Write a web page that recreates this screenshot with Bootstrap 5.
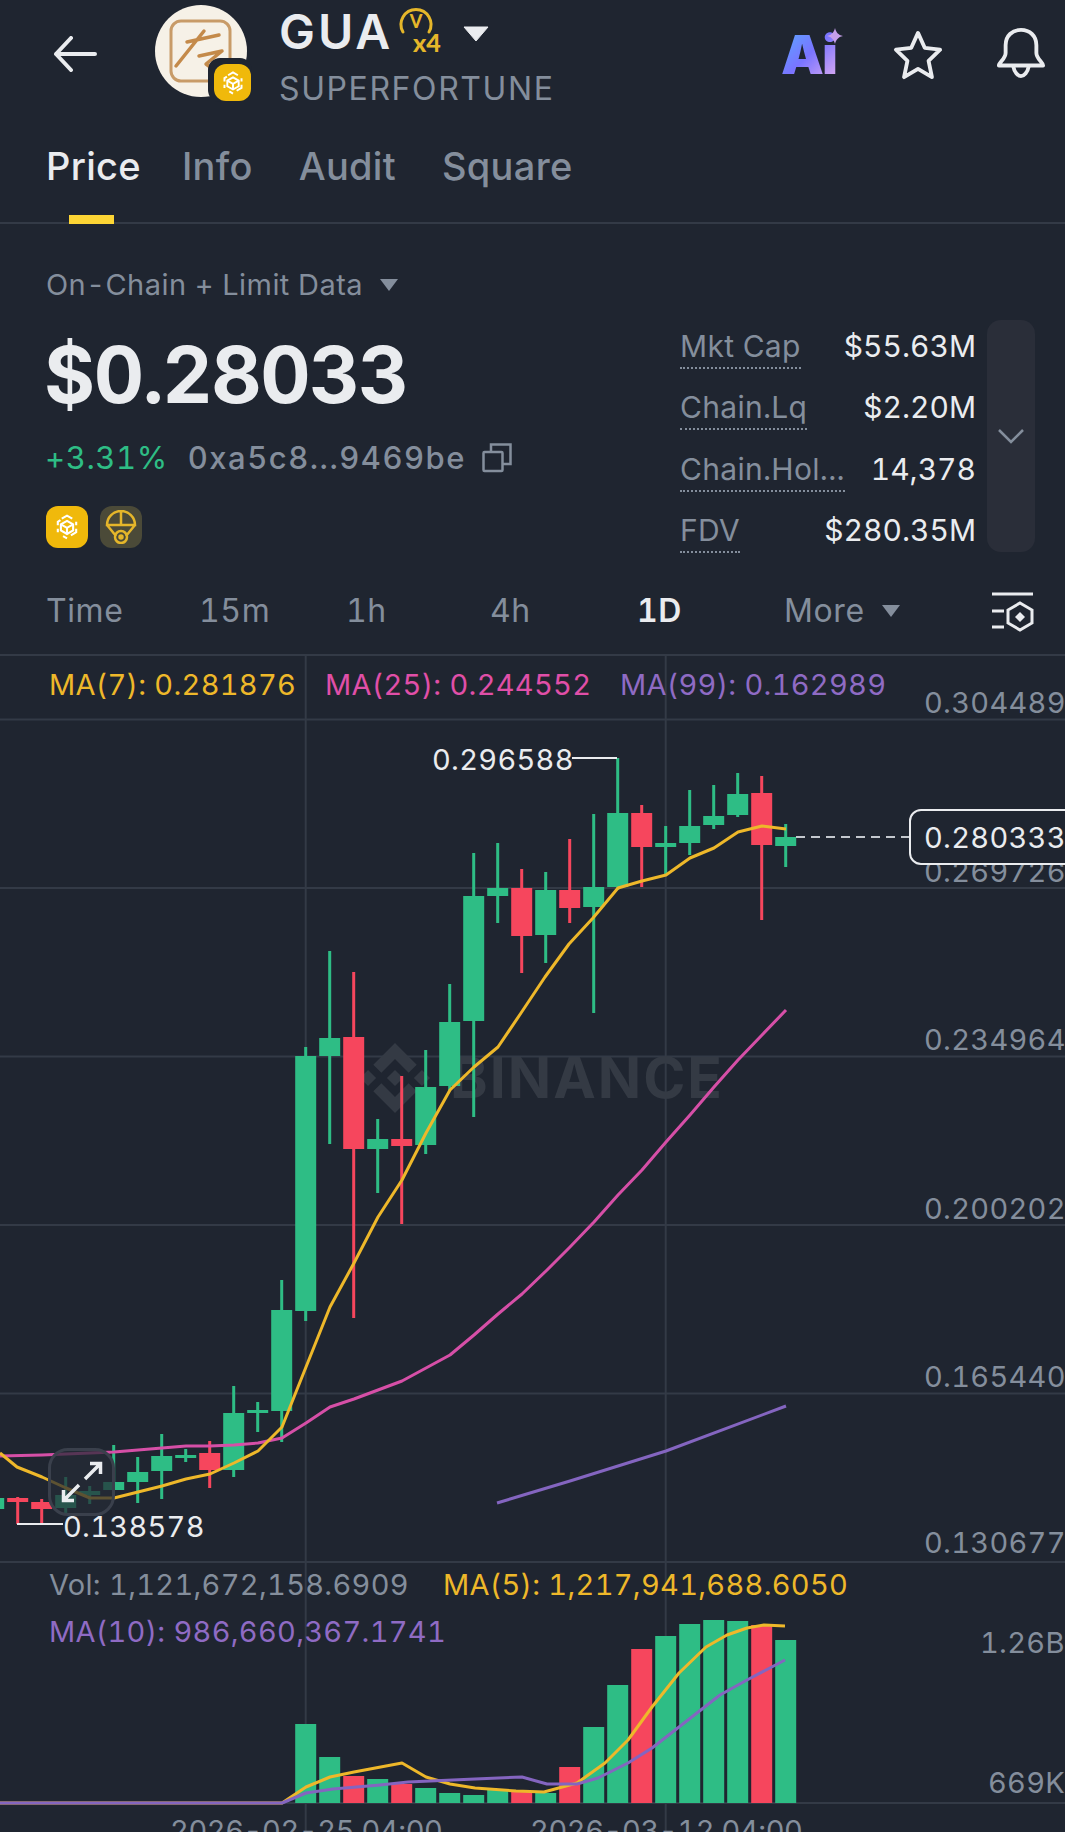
<!DOCTYPE html>
<html lang="en">
<head>
  <meta charset="UTF-8" />
  <title>GUA Price</title>
  <link href="https://cdn.jsdelivr.net/npm/bootstrap@5.3.0/dist/css/bootstrap.min.css" rel="stylesheet" />
  <style>
    html, body { margin: 0; background: #1f2530; }
    body { width: 1065px; height: 1832px; overflow: hidden; font-family: Inter, "Liberation Sans", sans-serif; font-variant-numeric: tabular-nums; color: #eaecef; }

    .top-bar { height: 108px; padding-left: 53px; }
    .back-icon { margin-top: 36px; }
    .avatar-box { width: 94px; height: 94px; margin: 4px 0 0 57px; }
    .chain-chip { right: -4px; bottom: -4px; width: 44px; height: 44px; background: #1f2530; border-radius: 12px; padding: 6px 1px 1px 6px; }
    .title-box { margin-left: 31px; }
    .coin-name { font-size: 48px; font-weight: 600; line-height: 1; margin-top: 8px; letter-spacing: 3px; }
    .coin-full { font-size: 32px; line-height: 1; margin-top: 17px; color: #848e9c; letter-spacing: 1.6px; }
    .vip-icon { margin: 0 0 -4px 3px; }
    .name-caret { margin: 0 0 14px 17px; }
    .ai-box { width: 62px; height: 60px; margin: 24px 0 0 0; }
    .ai-text { font-weight: 900; font-size: 54px; line-height: 1; letter-spacing: -2px; background: linear-gradient(135deg, #5aa7ff 5%, #7a74ff 50%, #d6a8f2 95%); -webkit-background-clip: text; background-clip: text; color: transparent; bottom: 2px; left: 0; }
    .ai-spark { right: 0; top: 4px; }
    .star-icon { margin: 30px 0 0 50px; }
    .bell-icon { margin: 26px 19px 0 53px; }

    .tab-row { height: 116px; padding-left: 46px; gap: 46px; border-bottom: 2px solid #333a46; }
    .tab-item { font-size: 38px; font-weight: 500; color: #848e9c; margin-top: 38px; line-height: 1.1; letter-spacing: .3px; }
    .tab-item.is-on { color: #eaecef; }
    .tab-item.is-on::after { content: ""; position: absolute; left: 23px; bottom: -2px; width: 45px; height: 9px; background: #fcd535; }
    .tab-cell { height: 114px; }
    .tab-first { margin-right: -5px; }

    .summary-box { height: 350px; padding-left: 46px; }
    .source-line { font-size: 29px; line-height: 1; margin-top: 46px; color: #848e9c; letter-spacing: .45px; }
    .price-big { font-size: 78px; font-weight: 700; line-height: 1; margin: 37px 0 0 -2px; letter-spacing: -1.4px; }
    .change-line { font-size: 31px; line-height: 1; margin: 28px 0 0 -1px; }
    .change-up { color: #2ebd85; letter-spacing: .6px; }
    .addr-text { color: #848e9c; font-weight: 500; margin-left: 20px; letter-spacing: 1.5px; }
    .copy-icon { margin-left: 16px; }
    .flag-row { margin-top: 33px; gap: 12px; }
    .flag-chip { width: 42px; height: 42px; border-radius: 12px; background: #f0b90b; }
    .flag-chip.is-dim { background: #4b4a38; }

    .stat-col { margin: 96px 0 0 auto; width: 293px; }
    .stat-line { height: 61.3px; font-size: 30px; line-height: 1; padding-top: 11px; }
    .stat-line > span:last-child { margin-right: -3px; }
    .stat-name { color: #848e9c; height: 38px; border-bottom: 2px dotted #848e9c; letter-spacing: .3px; }
    .expand-col { width: 48px; height: 232px; margin: 96px 30px 0 14px; background: #2a2e39; border-radius: 14px; }

    .range-row { height: 82px; padding-left: 46px; border-bottom: 2px solid #333a46; position: relative; }
    .range-item { font-size: 32px; color: #848e9c; width: 147px; margin-bottom: 6px; letter-spacing: .6px; }
    .range-item:nth-child(1) { width: 153px; }
    .range-item:nth-child(3) { width: 144px; }
    .range-item.is-on { color: #eaecef; font-weight: 600; }
    .range-tool { margin-left: 59px; margin-bottom: 4px; }

    .chart-box { width: 1065px; height: 1176px; }
    .chart-box text { font-family: Inter, "Liberation Sans", sans-serif; font-size: 29px; letter-spacing: .3px; }
    .chart-box text.date-tick { letter-spacing: -.4px; }
    .expand-btn { left: 48px; top: 792px; width: 67px; height: 68px; padding: 0; border: 3px solid #3a404c; border-radius: 20px; background: rgba(38,43,54,.72); }
  </style>
</head>
<body>
  <svg width="0" height="0" class="d-block">
    <symbol id="cube" viewBox="0 0 32 32">
      <g fill="none" stroke="#fff" stroke-width="2.4">
        <path d="M10 6.5 16 3l6 3.5M26.5 10v4M26.5 18v4l-6 3.5M16 29l-4.5-2.6M5.5 22v-4M5.5 14v-4l3-1.8"/>
        <path d="M16 9l7 4v7l-7 4-7-4v-7z"/>
        <path d="M9 13l7 4 7-4M16 17v7"/>
      </g>
    </symbol>
  </svg>

  <div class="top-bar d-flex align-items-start">
    <svg class="back-icon" width="44" height="36" viewBox="0 0 44 36" fill="none" stroke="#eaecef" stroke-width="4" stroke-linecap="round" stroke-linejoin="round"><path d="M42 18H3M18 2 3 18l15 16"/></svg>
    <div class="avatar-box position-relative">
      <svg width="94" height="94" viewBox="0 0 94 94">
        <circle cx="47" cy="47" r="46" fill="#f6f1e7"/>
        <rect x="17" y="17" width="59" height="60" rx="10" fill="none" stroke="#c89b68" stroke-width="3"/>
        <g fill="none" stroke="#c48a4a" stroke-width="3.5" stroke-linecap="round" stroke-linejoin="round">
          <path d="M33 38 65 31M50 27 22 62"/>
          <path d="M45 52 68 47 52 60 63 68"/>
        </g>
      </svg>
      <div class="chain-chip position-absolute">
        <div class="flag-chip d-flex align-items-center justify-content-center w-100 h-100">
          <svg width="26" height="26"><use href="#cube"/></svg>
        </div>
      </div>
    </div>
    <div class="title-box">
      <div class="d-flex align-items-end">
        <div class="coin-name">GUA</div>
        <svg class="vip-icon" width="50" height="54" viewBox="0 0 50 54">
          <path d="M7 26a15 15 0 1 1 26 0" fill="none" stroke="#e5b62a" stroke-width="3" stroke-linecap="round"/>
          <text x="20" y="22" text-anchor="middle" font-family="Lato" font-weight="900" font-size="18" fill="#e5b62a">V</text>
          <text x="17" y="46" font-family="Lato" font-weight="900" font-size="25" fill="#e5b62a">x4</text>
        </svg>
        <svg class="name-caret" width="26" height="16" viewBox="0 0 26 16"><path d="M1 1h24L13 15z" fill="#eaecef" stroke="#eaecef" stroke-linejoin="round"/></svg>
      </div>
      <div class="coin-full">SUPERFORTUNE</div>
    </div>
    <div class="ms-auto d-flex align-items-start">
      <div class="ai-box position-relative">
        <span class="ai-text position-absolute">Ai</span>
        <svg class="ai-spark position-absolute" width="16" height="16" viewBox="0 0 16 16"><path d="M8 0c1 4 3 7 8 8-5 1-7 4-8 8-1-4-3-7-8-8 5-1 7-4 8-8z" fill="#c7a0ea"/></svg>
      </div>
      <svg class="star-icon" width="50" height="50" viewBox="0 0 52 52" fill="none" stroke="#eaecef" stroke-width="4" stroke-linejoin="round"><path d="M26 3l7 15.500 16 2-12 11.500 3.500 17L26 40.500 11.500 49 15 32 3 20.500l16-2z"/></svg>
      <svg class="bell-icon" width="50" height="54" viewBox="0 0 52 54" fill="none" stroke="#eaecef" stroke-width="4" stroke-linejoin="round" stroke-linecap="round"><path d="M3 40c0-3 7-7 7-13V19C10 9 17 3 26 3s16 6 16 16v8c0 6 7 10 7 13z"/><path d="M18 41c1 6 5 10 8 10s7-4 8-10"/></svg>
    </div>
  </div>

  <div class="tab-row d-flex">
    <div class="tab-cell tab-first position-relative"><div class="tab-item is-on">Price</div></div>
    <div class="tab-cell"><div class="tab-item">Info</div></div>
    <div class="tab-cell"><div class="tab-item">Audit</div></div>
    <div class="tab-cell"><div class="tab-item">Square</div></div>
  </div>

  <div class="summary-box d-flex">
    <div>
      <div class="source-line d-flex align-items-center">On-Chain + Limit Data
        <svg class="ms-3" width="20" height="14" viewBox="0 0 20 14"><path d="M1 1h18l-9 12z" fill="#848e9c"/></svg>
      </div>
      <div class="price-big">$0.28033</div>
      <div class="change-line d-flex align-items-center">
        <span class="change-up">+3.31%</span>
        <span class="addr-text">0xa5c8...9469be</span>
        <svg class="copy-icon" width="30" height="30" viewBox="0 0 30 30" fill="none" stroke="#848e9c" stroke-width="2.500"><rect x="1.500" y="9" width="19" height="19" rx="1"/><path d="M9 9V1.500h19.500V21H21"/></svg>
      </div>
      <div class="flag-row d-flex">
        <div class="flag-chip d-flex align-items-center justify-content-center">
          <svg width="28" height="28"><use href="#cube"/></svg>
        </div>
        <div class="flag-chip is-dim d-flex align-items-center justify-content-center">
          <svg width="32" height="34" viewBox="0 0 32 34" fill="none" stroke="#e5b62a" stroke-width="2.500"><path d="M2 15a14 14 0 0 1 28 0zM16 1v14M2 15l9 11M30 15l-9 11"/><circle cx="16" cy="27" r="6"/><circle cx="16" cy="27" r="1.500" fill="#e5b62a"/></svg>
        </div>
      </div>
    </div>
    <div class="stat-col">
      <div class="stat-line d-flex justify-content-between"><span class="stat-name">Mkt Cap</span><span>$55.63M</span></div>
      <div class="stat-line d-flex justify-content-between"><span class="stat-name">Chain.Lq</span><span>$2.20M</span></div>
      <div class="stat-line d-flex justify-content-between"><span class="stat-name">Chain.Hol...</span><span>14,378</span></div>
      <div class="stat-line d-flex justify-content-between"><span class="stat-name">FDV</span><span>$280.35M</span></div>
    </div>
    <div class="expand-col d-flex align-items-center justify-content-center">
      <svg width="28" height="18" viewBox="0 0 28 18" fill="none" stroke="#848e9c" stroke-width="2.500"><path d="M2 3l12 12L26 3"/></svg>
    </div>
  </div>

  <div class="range-row d-flex align-items-center">
    <div class="range-item">Time</div>
    <div class="range-item">15m</div>
    <div class="range-item">1h</div>
    <div class="range-item">4h</div>
    <div class="range-item is-on">1D</div>
    <div class="range-item d-flex align-items-center">More
      <svg class="ms-3" width="20" height="14" viewBox="0 0 20 14"><path d="M1 1h18l-9 12z" fill="#848e9c"/></svg>
    </div>
    <svg class="range-tool" width="44" height="40" viewBox="0 0 44 40" fill="none" stroke="#eaecef" stroke-width="3"><path d="M2 2h41M2 19h12M2 35h12"/><path d="M30 11l12 7v13l-12 7-12-7V18z"/><path d="M30 20l5 5-5 5-5-5z" fill="#eaecef" stroke="none"/></svg>
  </div>

  <div class="chart-box position-relative">
    <svg id="chart" width="1065" height="1176" viewBox="0 656 1065 1176"></svg>
    <button class="btn expand-btn position-absolute" aria-label="Expand">
      <svg width="44" height="44" viewBox="0 0 44 44" fill="none" stroke="#eaecef" stroke-width="3.500"><path d="M25 19 40 4M30 3.500h10.500V14M19 25 4 40M14 40.500H3.500V30"/></svg>
    </button>
  </div>

  <script>
    const GREEN = "#2ebd85", RED = "#f6465d", YELLOW = "#eeb82a", PINK = "#d64fa7", PURPLE = "#8465c0";
    const GRID = "#333a46", GREY = "#848e9c", WHITE = "#eaecef";

    // top, bottom, wick top, wick bottom, colour
    const candles = [
      [1498,1509,1498,1509,"g"],[1498,1502,1497,1524,"r"],[1502,1509,1499,1523,"r"],[1495,1508,1477,1515,"g"],
      [1491,1495,1486,1504,"g"],[1482,1490,1445,1490,"g"],[1472,1482,1457,1503,"g"],[1456,1471,1434,1499,"g"],
      [1455,1458,1449,1462,"g"],[1453,1470,1441,1488,"r"],[1413,1470,1386,1477,"g"],[1410,1413,1402,1432,"g"],
      [1310,1411,1280,1442,"g"],[1056,1311,1047,1321,"g"],[1038,1056,951,1144,"g"],[1037,1149,972,1318,"r"],
      [1139,1149,1119,1193,"g"],[1139,1146,1076,1224,"r"],[1087,1145,1050,1154,"g"],[1022,1086,984,1090,"g"],
      [896,1021,853,1117,"g"],[888,896,843,923,"g"],[888,936,869,973,"r"],[890,935,872,963,"g"],
      [890,908,839,923,"r"],[887,907,814,1013,"g"],[813,887,758,890,"g"],[813,847,805,887,"r"],
      [843,847,826,875,"g"],[826,843,790,855,"g"],[816,825,785,829,"g"],[794,815,773,817,"g"],
      [793,845,776,920,"r"],[837,846,824,867,"g"]
    ];
    const ma7 = "0,1453 17,1467 42,1477 66,1488 90,1498 114,1498 138,1492 162,1486 186,1479 210,1474 234,1463 258,1451 282,1427 306,1367 330,1307 354,1263 378,1217 402,1180 426,1133 450,1090 474,1067 498,1047 521,1013 545,977 569,944 593,918 618,888 642,881 666,875 690,858 714,848 738,832 762,826 786,829";
    const ma25 = "0,1456 42,1455 66,1454 90,1453 114,1452 138,1450 162,1448 186,1446 210,1446 234,1445 258,1443 282,1438 306,1423 330,1407 354,1399 378,1390 402,1381 426,1368 450,1355 474,1335 498,1314 522,1294 546,1271 570,1247 594,1222 618,1195 642,1170 666,1142 690,1115 714,1087 738,1060 762,1035 786,1010";
    const ma99 = "497,1503 570,1481 666,1451 786,1406";
    // bar top, colour: first bar centred on x=306
    const bars = [[1724,"g"],[1757,"g"],[1776,"r"],[1779,"g"],[1784,"r"],[1788,"g"],[1793,"g"],[1795,"g"],[1790,"g"],[1792,"r"],[1793,"g"],[1767,"r"],[1727,"g"],[1685,"g"],[1649,"r"],[1636,"g"],[1624,"g"],[1620,"g"],[1621,"g"],[1625,"r"],[1640,"g"]];
    const volMa5 = "0,1803 282,1803 306,1787 330,1777 354,1772 402,1763 426,1777 450,1784 475,1788 516,1791 544,1792 577,1783 605,1763 628,1740 652,1707 679,1673 706,1647 727,1635 747,1628 764,1625 785,1626";
    const volMa10 = "0,1803 282,1803 306,1793 333,1789 380,1785 408,1782 475,1779 522,1777 547,1784 577,1784 598,1778 628,1763 652,1748 679,1727 720,1695 747,1680 785,1660";

    const col = (c) => (c === "g" ? GREEN : RED);
    const line = (pts, color, w = 3) => `<polyline points="${pts}" fill="none" stroke="${color}" stroke-width="${w}" stroke-linejoin="round"/>`;
    const txt = (x, y, s, fill, cls = "") => `<text x="${x}" y="${y}" fill="${fill}" class="${cls}">${s}</text>`;

    let svg = "";
    [719.5, 888, 1056.5, 1225, 1393.5, 1562].forEach((y) => (svg += `<line x1="0" x2="1065" y1="${y}" y2="${y}" stroke="${GRID}" stroke-width="2"/>`));
    svg += `<line x1="0" x2="1065" y1="1803" y2="1803" stroke="${GRID}" stroke-width="2"/>`;
    [305.7, 665.7].forEach((x) => (svg += `<line x1="${x}" x2="${x}" y1="656" y2="1832" stroke="${GRID}" stroke-width="2"/>`));

    // watermark
    svg += `<g transform="translate(360 1043) scale(.7)" fill="#343a44"><path d="M50 0 81 31 69.500 42.500 50 23 30.500 42.500 19 31zM50 100 81 69 69.500 57.500 50 77 30.500 57.500 19 69zM0 50 11.500 38.500 23 50 11.500 61.500zM100 50 88.500 38.500 77 50 88.500 61.500zM50 38.500 61.500 50 50 61.500 38.500 50z"/></g>`;
    svg += `<text x="450" y="1098" fill="#343a44" font-weight="700" style="font-size:57px;letter-spacing:2px">BINANCE</text>`;

    candles.forEach((c, i) => {
      const x = -6.3 + 24 * i;
      svg += `<rect x="${x - 1.5}" y="${c[2]}" width="3" height="${c[3] - c[2]}" fill="${col(c[4])}"/>`;
      svg += `<rect x="${x - 10.5}" y="${c[0]}" width="21" height="${c[1] - c[0]}" fill="${col(c[4])}"/>`;
    });
    svg += line(ma99, PURPLE) + line(ma25, PINK) + line(ma7, YELLOW);

    bars.forEach((b, i) => {
      const x = 305.7 + 24 * i;
      svg += `<rect x="${x - 10.5}" y="${b[0]}" width="21" height="${1803 - b[0]}" fill="${col(b[1])}"/>`;
    });
    svg += line(volMa5, YELLOW) + line(volMa10, PURPLE);

    // high / low markers
    svg += line("572,758 617,758", WHITE, 2) + txt(432, 770, "0.296588", WHITE);
    svg += line("17,1524 63,1524", WHITE, 2) + txt(63, 1537, "0.138578", WHITE);

    // right axis
    [[713,"0.304489"],[882,"0.269726"],[1050,"0.234964"],[1219,"0.200202"],[1387,"0.165440"],[1553,"0.130677"]].forEach((a) => (svg += txt(924, a[0], a[1], GREY)));
    svg += txt(980, 1653, "1.26B", GREY) + txt(988, 1793, "669K", GREY);

    // last price tag
    svg += `<line x1="796" x2="909" y1="837" y2="837" stroke="#c4c8ce" stroke-width="2" stroke-dasharray="9 6"/>`;
    svg += `<rect x="910" y="810" width="180" height="54" rx="11" fill="#1f2530" stroke="${WHITE}" stroke-width="2"/>`;
    svg += txt(924, 848, "0.280333", WHITE);

    // legends
    svg += txt(49, 695, "MA(7): 0.281876", YELLOW) + txt(325, 695, "MA(25): 0.244552", "#e04fa8") + txt(620, 695, "MA(99): 0.162989", "#8f6bc4");
    svg += txt(49, 1595, "Vol: 1,121,672,158.6909", GREY) + txt(443, 1595, "MA(5): 1,217,941,688.6050", YELLOW);
    svg += txt(49, 1642, "MA(10): 986,660,367.1741", "#8f6bc4");
    svg += txt(170, 1841, "2026-02-25 04:00", GREY, "date-tick") + txt(530, 1841, "2026-03-12 04:00", GREY, "date-tick");

    document.getElementById("chart").innerHTML = svg;
  </script>
  <script src="https://cdn.jsdelivr.net/npm/bootstrap@5.3.0/dist/js/bootstrap.bundle.min.js"></script>
</body>
</html>
